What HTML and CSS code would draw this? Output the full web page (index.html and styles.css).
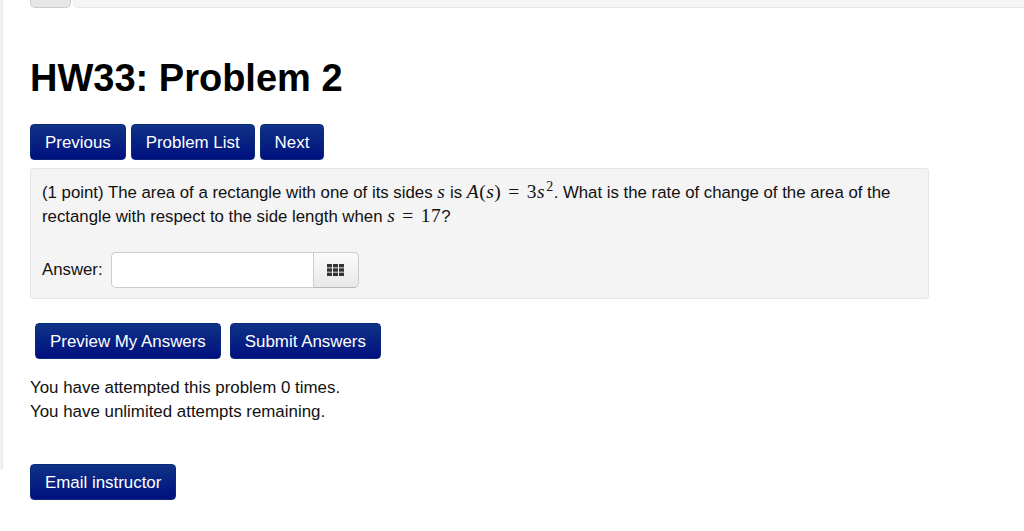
FILE: index.html
```html
<!DOCTYPE html>
<html lang="en">
<head>
<meta charset="utf-8">
<title>HW33: Problem 2</title>
<link rel="stylesheet" href="styles.css">
</head>
<body>
<div class="rail"></div>
<div class="topstrip">
  <div class="topbtn"></div>
  <div class="topbar"></div>
</div>
<main class="content">
  <h1 class="title">HW33: Problem 2</h1>
  <nav class="nav">
    <a class="btn">Previous</a>
    <a class="btn">Problem List</a>
    <a class="btn">Next</a>
  </nav>
  <section class="well">
    <p class="problem">(1 point) The area of a rectangle with one of its sides <span class="math"><i>s</i></span> is <span class="math"><i>A</i>(<i>s</i>)<span class="rel">=</span>3<i>s</i><sup>2</sup></span>. What is the rate of change of the area of the<br>rectangle with respect to the side length when <span class="math"><i>s</i><span class="rel">=</span>17</span>?</p>
    <div class="answer">
      <label class="answer-label">Answer:</label>
      <div class="input-group">
        <div class="input"></div>
        <div class="addon">
          <svg class="grid-icon" width="17" height="12" viewBox="0 0 17 12" aria-hidden="true">
            <g fill="#333">
              <rect x="0" y="0" width="5" height="3.4"/><rect x="6" y="0" width="5" height="3.4"/><rect x="12" y="0" width="5" height="3.4"/>
              <rect x="0" y="4.3" width="5" height="3.4"/><rect x="6" y="4.3" width="5" height="3.4"/><rect x="12" y="4.3" width="5" height="3.4"/>
              <rect x="0" y="8.6" width="5" height="3.4"/><rect x="6" y="8.6" width="5" height="3.4"/><rect x="12" y="8.6" width="5" height="3.4"/>
            </g>
          </svg>
        </div>
      </div>
    </div>
  </section>
  <div class="actions">
    <a class="btn">Preview My Answers</a>
    <a class="btn">Submit Answers</a>
  </div>
  <div class="attempts">
    <div>You have attempted this problem 0 times.</div>
    <div>You have unlimited attempts remaining.</div>
  </div>
  <a class="btn email">Email instructor</a>
</main>
</body>
</html>
```
FILE: styles.css
```css
* { box-sizing: border-box; }
html, body { margin: 0; padding: 0; }
body {
  position: relative;
  width: 1024px;
  height: 531px;
  overflow: hidden;
  background: #fff;
  color: #111;
  font-family: "Liberation Sans", Arial, sans-serif;
  font-size: 16.9px;
  line-height: 24px;
}
.rail {
  position: absolute;
  left: 0;
  top: 0;
  width: 3px;
  height: 470px;
  background: #f2f2f2;
  border-right: 1px solid #e8e8e8;
  border-radius: 0 0 3px 0;
}
.topstrip {
  display: flex;
  height: 8px;
  padding-left: 30px;
  gap: 2px;
}
.topbtn {
  width: 41px;
  height: 8px;
  background: #e6e6e6;
  border: 1px solid #ccc;
  border-top: 0;
  border-radius: 0 0 5px 5px;
}
.topbar {
  flex: 1;
  height: 8px;
  background: #f5f5f5;
  border-bottom: 1px solid #e6e6e6;
  border-left: 1px solid #eee;
  border-radius: 0 0 0 5px;
}
.content { padding-left: 30px; }
.title {
  margin: 48px 0 0;
  font-size: 38px;
  line-height: 44px;
  font-weight: 700;
  color: #000;
}
.nav {
  display: flex;
  gap: 5px;
  margin-top: 24px;
}
.btn {
  display: inline-block;
  height: 36px;
  padding: 0 14px;
  line-height: 35px;
  font-size: 16.9px;
  color: #fff;
  white-space: nowrap;
  background: linear-gradient(to bottom, #0f3386, #00107f);
  border: 1px solid #0a2a7a;
  border-radius: 4px;
}
.well {
  width: 899px;
  height: 131px;
  margin-top: 8px;
  padding: 12px 11px 0;
  font-size: 16.8px;
  background: #f4f4f4;
  border: 1px solid #e6e6e6;
  border-radius: 3px;
}
.problem { margin: 0; }
.math {
  font-family: "Liberation Serif", "Times New Roman", serif;
  font-size: 19.5px;
  letter-spacing: 0.5px;
  line-height: 0;
}
.rel { padding: 0 7px; }
.math sup {
  font-size: 14px;
  line-height: 0;
  margin-left: 1px;
}
.answer {
  display: flex;
  align-items: center;
  gap: 8px;
  margin-top: 23px;
}
.input-group {
  display: flex;
  width: 248px;
  height: 36px;
}
.input {
  width: 202px;
  background: #fff;
  border: 1px solid #ccc;
  border-right: 0;
  border-radius: 5px 0 0 5px;
}
.addon {
  flex: 1;
  display: flex;
  align-items: center;
  justify-content: center;
  background: linear-gradient(to bottom, #fbfbfb, #e8e8e8);
  border: 1px solid #ccc;
  border-bottom-color: #b8b8b8;
  border-radius: 0 5px 5px 0;
}
.actions {
  display: flex;
  gap: 9px;
  margin-top: 24px;
  padding-left: 5px;
}
.attempts { margin-top: 17px; }
.email { margin-top: 40px; }
```
